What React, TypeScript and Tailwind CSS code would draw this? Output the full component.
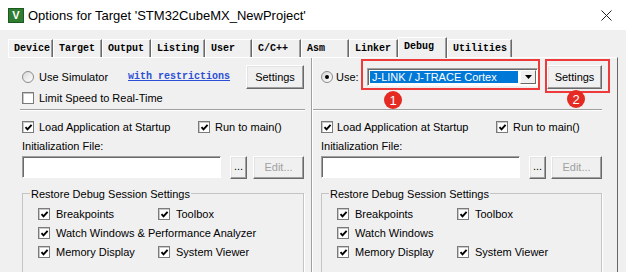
const ui = "font-['Liberation_Sans',Arial,sans-serif] text-[11px] text-black leading-none"

const tabs = [
  { label: 'Device', w: 'w-[45px]' },
  { label: 'Target', w: 'w-[49px]' },
  { label: 'Output', w: 'w-[49px]' },
  { label: 'Listing', w: 'w-[54px]' },
  { label: 'User', w: 'w-[47px]' },
  { label: 'C/C++', w: 'w-[49px]' },
  { label: 'Asm', w: 'w-[48px]' },
  { label: 'Linker', w: 'w-[49px]' },
  { label: 'Debug', w: 'w-[49px]', active: true },
  { label: 'Utilities', w: 'w-[65px]' },
]

function Check() {
  return (
    <span className="flex h-[12px] w-[12px] shrink-0 items-center justify-center border border-[#7a7a7a] bg-white shadow-[inset_1px_1px_0_#c8c8c8]">
      <svg width="9" height="9" viewBox="0 0 9 9">
        <polyline points="1.5,4.2 3.5,6.4 7.6,1.8" fill="none" stroke="#000" strokeWidth="1.9" />
      </svg>
    </span>
  )
}

function EmptyCheck() {
  return <span className="h-[12px] w-[12px] shrink-0 border border-[#7a7a7a] bg-white shadow-[inset_1px_1px_0_#c8c8c8]" />
}

function Radio({ on }: { on?: boolean }) {
  return (
    <span className="flex h-[12px] w-[12px] shrink-0 items-center justify-center rounded-full border border-[#8a8a8a] bg-gradient-to-br from-[#d8d8d8] to-white">
      {on && <span className="h-[4px] w-[4px] rounded-full bg-black" />}
    </span>
  )
}

function Btn({ children, cls, disabled }: { children: React.ReactNode; cls: string; disabled?: boolean }) {
  return (
    <div
      className={
        'flex shrink-0 items-center justify-center border border-t-white border-l-white border-r-[#696969] border-b-[#696969] bg-[#f0f0f0] shadow-[inset_-1px_-1px_0_#a0a0a0,inset_1px_1px_0_#e3e3e3] ' +
        cls +
        (disabled ? ' text-[#a0a0a0]' : '')
      }
    >
      {children}
    </div>
  )
}

function Separator({ cls }: { cls: string }) {
  return <div className={'h-[2px] border-t border-t-[#a0a0a0] border-b border-b-white ' + cls} />
}

function Column({ right }: { right?: boolean }) {
  return (
    <div className={right ? 'w-[304px] pl-[8px] pr-[15px] pt-[7px]' : 'w-[303px] pl-[14px] pr-[7px] pt-[7px]'}>
      {right ? (
        <div className="flex h-[24px] items-center">
          <Radio on />
          <span className="ml-[3px] w-[31px]">Use:</span>
          <div className="relative flex h-[18px] w-[171px] border border-t-[#a0a0a0] border-l-[#a0a0a0] border-r-white border-b-white bg-white shadow-[inset_1px_1px_0_#696969]">
            <div className="m-[2px] flex flex-1 items-center bg-[#0078d7] pl-[2px] text-white">J-LINK / J-TRACE Cortex</div>
            <div className="my-[1px] mr-[1px] flex w-[16px] items-center justify-center border border-t-white border-l-white border-r-[#696969] border-b-[#696969] bg-[#f0f0f0]">
              <svg width="7" height="4" viewBox="0 0 7 4">
                <polygon points="0,0 7,0 3.5,4" fill="#000" />
              </svg>
            </div>
            <div className="absolute -top-[10px] -left-[7px] -right-[3px] -bottom-[5px] border-2 border-[#ee3a3a]" />
            <div className="absolute top-[22px] left-[16px] flex h-[18px] w-[18px] items-center justify-center rounded-full bg-[#e42a22] text-[13px] text-white">
              1
            </div>
          </div>
          <div className="relative ml-[9px]">
            <Btn cls="h-[24px] w-[55px]">Settings</Btn>
            <div className="absolute -top-[6px] -left-[2px] -right-[8px] -bottom-[4px] border-2 border-[#ee3a3a]" />
            <div className="absolute top-[25px] left-[20px] flex h-[18px] w-[18px] items-center justify-center rounded-full bg-[#e42a22] text-[13px] text-white">
              2
            </div>
          </div>
        </div>
      ) : (
        <div className="flex h-[24px] items-center">
          <Radio />
          <span className="ml-[5px] w-[89px]">Use Simulator</span>
          <span className="font-['Liberation_Mono',monospace] text-[10px] font-bold text-[#2a4fd6] underline">with restrictions</span>
          <Btn cls="ml-auto h-[24px] w-[58px]">Settings</Btn>
        </div>
      )}
      <div className="mt-[2px] flex h-[14px] items-center">
        {!right && (
          <>
            <EmptyCheck />
            <span className="ml-[5px]">Limit Speed to Real-Time</span>
          </>
        )}
      </div>
      <Separator cls={right ? '-ml-[8px] mt-[4px]' : '-ml-[2px] mr-[-1px] mt-[4px]'} />
      <div className="mt-[9px] flex h-[14px] items-center">
        <Check />
        <span className={right ? 'ml-[4px] w-[159px]' : 'ml-[5px] w-[159px]'}>Load Application at Startup</span>
        <Check />
        <span className="ml-[5px]">Run to main()</span>
      </div>
      <div className="mt-[5px] flex h-[14px] items-center">Initialization File:</div>
      <div className="mt-[3px] flex h-[23px] items-start">
        <div className="h-[22px] w-[199px] border border-t-[#a0a0a0] border-l-[#a0a0a0] border-r-white border-b-white bg-white shadow-[inset_1px_1px_0_#696969]" />
        <Btn cls="ml-[9px] h-[23px] w-[17px] items-end pb-[6px]">...</Btn>
        <Btn cls="ml-auto h-[23px] w-[51px]" disabled>
          Edit...
        </Btn>
      </div>
      <div className="relative mt-[14px] h-[90px] border border-[#c4c4c4] pt-[13px] pl-[15px] shadow-[1px_1px_0_#fff]">
        <span className="absolute -top-[7px] left-[7px] bg-[#f0f0f0] px-[1px] leading-[14px]">Restore Debug Session Settings</span>
        <div className="flex flex-col gap-[5px]">
          <div className="flex h-[14px] items-center">
            <Check />
            <span className="ml-[6px] w-[102px]">Breakpoints</span>
            <Check />
            <span className="ml-[6px]">Toolbox</span>
          </div>
          <div className="flex h-[14px] items-center">
            <Check />
            <span className="ml-[6px]">{right ? 'Watch Windows' : 'Watch Windows & Performance Analyzer'}</span>
          </div>
          <div className="flex h-[14px] items-center">
            <Check />
            <span className="ml-[6px] w-[102px]">Memory Display</span>
            <Check />
            <span className="ml-[6px]">System Viewer</span>
          </div>
        </div>
      </div>
    </div>
  )
}

export default function App() {
  return (
    <div className={'h-[272px] w-[626px] overflow-hidden bg-[#f0f0f0] ' + ui}>
      <div className="flex h-[30px] items-center bg-white pl-[8px]">
        <div className="flex h-[15px] w-[16px] items-center justify-center bg-[#2f7d32] text-[11px] font-bold text-white shadow-[inset_0_0_0_1px_#1d5a20]">
          V
        </div>
        <span className="ml-[4px] text-[13px]">Options for Target 'STM32CubeMX_NewProject'</span>
        <svg className="ml-auto mr-[14px]" width="11" height="11" viewBox="0 0 11 11">
          <path d="M0.5 0.5 L10.5 10.5 M10.5 0.5 L0.5 10.5" stroke="#222" strokeWidth="1" />
        </svg>
      </div>
      <div className="pt-[7px]">
        <div className="flex h-[20px] items-end pl-[8px] font-['Liberation_Mono',monospace] text-[10px] font-bold">
          {tabs.map((t) => (
            <div
              key={t.label}
              className={
                'flex shrink-0 items-center pl-[5px] border-t border-l border-t-white border-l-white border-r border-r-[#696969] shadow-[inset_-1px_0_0_#a0a0a0] ' +
                t.w +
                (t.active ? ' relative z-10 -mb-[1px] h-[21px] bg-[#f0f0f0] pb-[2px]' : ' h-[18px]')
              }
            >
              {t.label}
            </div>
          ))}
        </div>
        <div className="ml-[8px] flex w-[610px] border-t border-t-white border-r border-r-[#696969]">
          <Column />
          <div className="w-[2px] border-l border-l-[#a0a0a0] border-r border-r-white" />
          <Column right />
        </div>
      </div>
    </div>
  )
}
